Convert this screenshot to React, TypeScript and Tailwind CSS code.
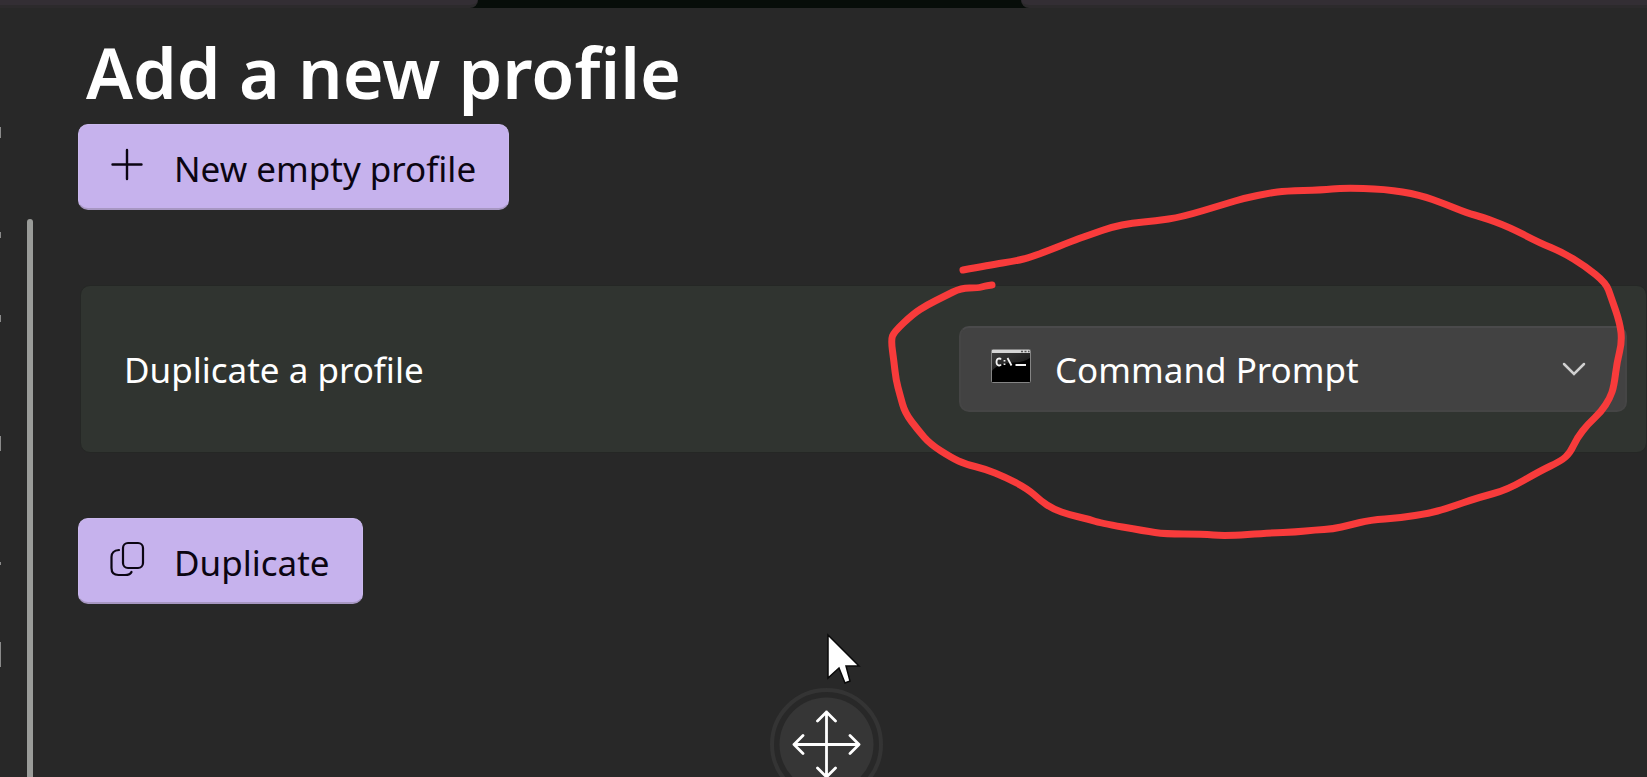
import type { ReactNode } from 'react'

// clipped ends of the navigation labels: gap above and height of each
const navMarks = [
    'mt-[119px] h-[11px]',
    'mt-[94px] h-[6px]',
    'mt-[77px] h-[7px]',
    'mt-[114px] h-[15px]',
    'mt-[111px] h-[3px]',
    'mt-[77px] h-[25px]',
]

const stroke: [number, number][] = [
    [963, 270], [990, 265], [1015, 261], [1032, 257], [1075, 240], [1092, 234], [1112, 227], [1132, 223],
    [1155, 221], [1182, 217], [1225, 204], [1245, 198], [1270, 193], [1285, 191], [1322, 190], [1342, 188],
    [1385, 189], [1420, 195], [1445, 204], [1467, 213], [1482, 217], [1509, 227], [1540, 243], [1562, 252],
    [1585, 266], [1606, 283], [1611, 297], [1620, 323], [1622, 342], [1617, 362], [1614, 386], [1610, 398],
    [1601, 412], [1588, 424], [1577, 438], [1570, 453], [1561, 461], [1540, 471], [1507, 490], [1480, 497],
    [1445, 509], [1430, 513], [1400, 518], [1370, 520], [1350, 525], [1333, 529], [1315, 530], [1296, 532],
    [1270, 533], [1225, 536], [1202, 534], [1165, 534], [1145, 531], [1100, 523], [1088, 519], [1070, 515],
    [1053, 509], [1041, 501], [1028, 489], [1005, 477], [985, 469], [965, 464], [952, 458], [930, 444],
    [918, 430], [905, 413], [900, 395], [896, 380], [894, 362], [891, 340], [894, 332], [913, 314],
    [927, 305], [945, 296], [961, 288], [978, 288], [985, 286], [992, 285],
]

// run quadratic curves through the midpoints so the line looks hand drawn
function smooth(points: [number, number][]) {
    let d = `M${points[0][0]} ${points[0][1]}`
    for (let i = 1; i < points.length - 1; i++) {
        const [x, y] = points[i]
        const [nx, ny] = points[i + 1]
        d += `Q${x} ${y} ${(x + nx) / 2} ${(y + ny) / 2}`
    }
    const last = points[points.length - 1]
    return `${d}L${last[0]} ${last[1]}`
}

function AccentButton({ icon, children }: { icon: ReactNode; children: ReactNode }) {
    return (
        <button
            type="button"
            className="flex h-[86px] items-center gap-7 self-start rounded-[10px] border border-[#cbb9ee] border-b-2 border-b-[#a797c2] bg-[#c6b2ed] pl-[31px] pr-8 text-[35px] leading-[48px] text-[#0b0512]"
        >
            {icon}
            <span className="pt-1">{children}</span>
        </button>
    )
}

function PlusIcon() {
    return (
        <svg className="mb-1 h-9 w-9" viewBox="0 0 36 36" fill="none" stroke="currentColor" strokeWidth="2.4" strokeLinecap="round">
            <path d="M17 3V32M2.500 17.500H31.500" />
        </svg>
    )
}

function CopyIcon() {
    return (
        <svg className="mb-1 h-9 w-9" viewBox="0 0 36 36" fill="none" stroke="currentColor" strokeWidth="2.2" strokeLinecap="round">
            <rect x="13" y="2" width="20" height="25" rx="5" />
            <path d="M9 9C4 9.500 1.500 11 1.500 16V27C1.500 31.500 4 34 8.500 34H15C18.500 34 20.500 33.500 21.500 31" />
        </svg>
    )
}

function PromptIcon() {
    return (
        <svg className="pointer-events-none absolute left-8 top-[23px] h-9 w-10" viewBox="0 0 40 36">
            <defs>
                <linearGradient id="screen" x1="0" y1="0" x2="1" y2="1">
                    <stop offset="0" stopColor="#3c3c3c" />
                    <stop offset="1" stopColor="#101010" />
                </linearGradient>
            </defs>
            <rect x="0.500" y="0.500" width="39" height="33" rx="1" fill="#000" stroke="#858585" />
            <path d="M1 4H39V9C32 14 26 13 18 14C9 15 4 18 1 22Z" fill="url(#screen)" />
            <path d="M1 1H39V4H1Z" fill="#d5d5d5" />
            <path d="M30 2.500H32M33.500 2.500H35.500M37 2.500H38.500" stroke="#555" strokeWidth="1.500" />
            <path
                d="M10 10.500C9 9 5.500 9 5.500 13C5.500 17 9 17 10 15.500M13.500 11V12.500M13.500 14.500V16M16.500 9L20.500 16.500M24.500 16H35"
                fill="none"
                stroke="#f4f4f4"
                strokeWidth="1.800"
            />
        </svg>
    )
}

export default function App() {
    return (
        <div className="relative flex min-h-screen flex-col overflow-hidden bg-[#282828] font-['Noto_Sans','Open_Sans',sans-serif] text-white">
            {/* Tab strip */}
            <div className="flex h-2 bg-[#070d09]">
                <div className="w-[29%] rounded-br-lg border-b-[3px] border-[#2c2a2c] bg-[#332e34]" />
                <div className="w-[33%]" />
                <div className="flex-1 rounded-bl-lg border-b-[3px] border-[#2c2a2c] bg-[#332e34]" />
            </div>

            <div className="flex flex-1">
                {/* Navigation edge and its scroll bar */}
                <aside className="flex w-[78px] shrink-0">
                    <div className="w-[27px]">
                        {navMarks.map((mark) => (
                            <div key={mark} className={`w-px bg-[#8a8a8a] ${mark}`} />
                        ))}
                    </div>
                    <div className="mt-[211px] w-[6px] rounded-t-full bg-[#9a9c99]" />
                </aside>

                <main className="flex min-w-0 flex-1 flex-col">
                    <h1 className="mt-3.5 mb-0.5 pl-2 text-[70px] font-semibold leading-[100px]">Add a new profile</h1>
                    <AccentButton icon={<PlusIcon />}>New empty profile</AccentButton>

                    <div className="ml-[2px] mt-[75px] flex h-[168px] items-center justify-between rounded-[10px] border border-[#252725] bg-[#303430] pl-[43px] pr-[19px]">
                        <label htmlFor="profile" className="pt-0.5 text-[35px] leading-[48px]">
                            Duplicate a profile
                        </label>
                        <div className="relative w-4/9">
                            <select
                                id="profile"
                                className="h-[86px] w-full appearance-none rounded-[10px] border-2 border-[#454545] border-t-[#4a4a4b] bg-[#424242] pl-[94px] pr-20 pt-0.5 text-[35px] leading-[48px] text-white"
                            >
                                <option>Command Prompt</option>
                            </select>
                            <PromptIcon />
                            <svg
                                className="pointer-events-none absolute right-[41px] top-9 h-[14px] w-6"
                                viewBox="0 0 24 14"
                                fill="none"
                                stroke="#d0d0d0"
                                strokeWidth="2.500"
                                strokeLinecap="round"
                            >
                                <path d="M2 2L12 12L22 2" />
                            </svg>
                        </div>
                    </div>

                    <div className="mt-[65px] flex">
                        <AccentButton icon={<CopyIcon />}>Duplicate</AccentButton>
                    </div>
                </main>
            </div>

            {/* Hand drawn ring */}
            <svg className="pointer-events-none absolute right-0 top-[170px] h-[380px] w-[767px]" viewBox="880 170 767 380" fill="none">
                <path d={smooth(stroke)} stroke="#f83b3b" strokeWidth="7" strokeLinecap="round" strokeLinejoin="round" />
            </svg>

            {/* Pointer and move handle */}
            <svg className="pointer-events-none absolute bottom-0 left-1/2 h-[157px] w-[160px] -translate-x-[74px]" viewBox="750 620 160 157" fill="none">
                <path
                    d="M828 635L859 666H846L850 681L845 683L839 668L828 678Z"
                    fill="#fff"
                    stroke="#0a0a0a"
                    strokeWidth="1.500"
                />
                <circle cx="826.500" cy="744.500" r="54.500" stroke="#343434" strokeWidth="4" />
                <circle cx="826.500" cy="744.500" r="47" fill="#363636" />
                <path
                    d="M826.500 712V777M794 744.500H859M817.500 721L826.500 712L835.500 721M817.500 768L826.500 777L835.500 768M803 735.500L794 744.500L803 753.500M850 735.500L859 744.500L850 753.500"
                    stroke="#fff"
                    strokeWidth="2.800"
                    strokeLinecap="round"
                    strokeLinejoin="round"
                />
            </svg>
        </div>
    )
}
